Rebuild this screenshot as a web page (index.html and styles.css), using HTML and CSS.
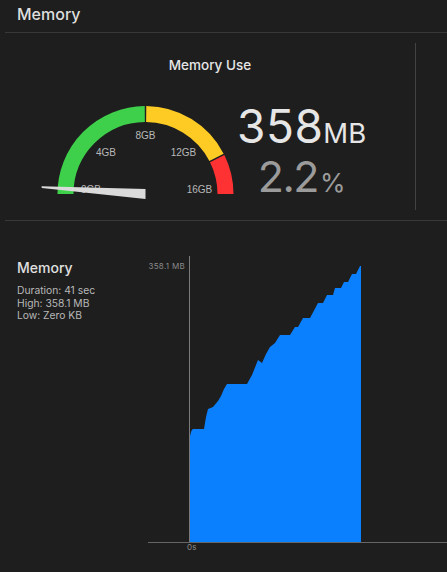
FILE: index.html
```html
<!DOCTYPE html>
<html lang="en">
<head>
<meta charset="utf-8">
<title>Memory</title>
<link rel="stylesheet" href="styles.css">
</head>
<body>
<header class="header">Memory</header>

<section class="overview">
  <div class="usage">
    <h2 class="usage-title">Memory Use</h2>
    <div class="usage-body">
      <svg class="gauge" width="202" height="115" viewBox="35 95 202 115">
        <path d="M65.5,194 A80,80 0 0 1 144.8,114" class="arc-green"/>
        <path d="M146.2,114 A80,80 0 0 1 216.5,157.3" class="arc-yellow"/>
        <path d="M217.2,158.6 A80,80 0 0 1 225.5,194" class="arc-red"/>
        <text x="145.5" y="139" class="tick">8GB</text>
        <text x="106" y="155.7" class="tick">4GB</text>
        <text x="183.5" y="155.7" class="tick">12GB</text>
        <text x="91" y="192.7" class="tick">0GB</text>
        <text x="199.5" y="192.7" class="tick">16GB</text>
        <polygon points="41.5,186.3 41.8,188 145.5,199 145.5,189" class="needle"/>
      </svg>
      <div class="readout">
        <div class="readout-main"><span class="digits-main">358</span><span class="unit-main">MB</span></div>
        <div class="readout-pct"><span class="digits-pct">2.2</span><span class="unit-pct">%</span></div>
      </div>
    </div>
  </div>
  <div class="vsep"></div>
</section>

<section class="history">
  <div class="info">
    <h3 class="info-title">Memory</h3>
    <p class="info-line">Duration: 41 sec</p>
    <p class="info-line">High: 358.1 MB</p>
    <p class="info-line">Low: Zero KB</p>
  </div>
  <svg class="chart" width="307" height="310" viewBox="140 250 307 310">
    <path class="area" d="M189,542 L189,457 C189,440 190,431 193,429 L204,429 L206,417 L208,409 L213,407 L218,401 L221,396 L224,389 L227,384 L247,384 L252,375 L258,360 L262,363 L266,354 L270,347 L275,343 L280,335 L290,335 L295,327 L298,327 L303,318 L310,318 L318,303 L323,303 L327,295 L333,295 L335,288 L341,288 L344,282 L348,282 L352,274 L356,274 L360,266 L361,266 L361,542 Z"/>
    <line x1="189.5" y1="256" x2="189.5" y2="542" class="axis-y"/>
    <line x1="148" y1="542.5" x2="447" y2="542.5" class="axis-x"/>
    <text x="185" y="268.5" class="axis-label end">358.1 MB</text>
    <text x="187" y="549.5" class="axis-label">0s</text>
  </svg>
</section>
</body>
</html>
```

FILE: styles.css
```css
html, body {
  margin: 0;
  padding: 0;
  background: #1e1e1e;
}

body {
  width: 447px;
  height: 572px;
  overflow: hidden;
  font-family: Inter, "Liberation Sans", sans-serif;
  color: #e0e0e0;
}

.header {
  margin-left: 5px;
  padding: 4px 0 8px 12px;
  height: 20px;
  line-height: 20px;
  font-size: 16px;
  font-weight: 500;
  color: #dedede;
  border-bottom: 1px solid #383838;
}

.overview {
  display: flex;
  margin-left: 5px;
  height: 187px;
  border-bottom: 1px solid #383838;
}

.usage {
  width: 410px;
  display: flex;
  flex-direction: column;
}

.usage-title {
  margin: 0;
  padding-top: 24px;
  text-align: center;
  font-size: 13.5px;
  line-height: 16px;
  font-weight: 500;
  color: #e6e6e6;
}

.usage-body {
  display: flex;
  align-items: flex-start;
  margin-top: 22px;
  padding-left: 30px;
}

.gauge {
  display: block;
  flex: none;
}

.arc-green, .arc-yellow, .arc-red {
  fill: none;
  stroke-width: 16;
}
.arc-green { stroke: #3fd04b; }
.arc-yellow { stroke: #fecb25; }
.arc-red { stroke: #fe3233; }

.tick {
  font-family: "Liberation Sans", Arial, sans-serif;
  font-size: 10px;
  fill: #b8b8b8;
  text-anchor: middle;
}

.needle {
  fill: #dadada;
}

.readout {
  display: flex;
  flex-direction: column;
  align-items: center;
  padding-top: 7px;
}

.readout-main {
  font-size: 46px;
  line-height: 48px;
  color: #e6e6e6;
  white-space: nowrap;
}

.digits-main {
  letter-spacing: 0.5px;
}

.unit-main {
  font-size: 27.5px;
  line-height: 1;
}

.readout-pct {
  margin-top: 2px;
  font-size: 43px;
  line-height: 48px;
  color: #9b9b9b;
  white-space: nowrap;
}

.digits-pct {
  letter-spacing: -1.5px;
}

.unit-pct {
  font-size: 26px;
  line-height: 1;
  margin-left: 2px;
}

.vsep {
  width: 1px;
  margin: 10px 0;
  background: #424242;
}

.history {
  display: flex;
  align-items: flex-start;
}

.info {
  width: 123px;
  flex: none;
  padding-left: 17px;
  padding-top: 38px;
}

.info-title {
  margin: 0 0 8px 0;
  font-size: 14px;
  line-height: 17px;
  font-weight: 500;
  color: #e0e0e0;
}

.info-line {
  margin: 0;
  font-size: 10.3px;
  line-height: 12.5px;
  color: #b8b8b8;
}

.chart {
  display: block;
  flex: none;
  margin-top: 29px;
}

.area {
  fill: #0a80ff;
}

.axis-y {
  stroke: #7a7a7a;
  stroke-width: 1;
}

.axis-x {
  stroke: #666;
  stroke-width: 1;
}

.axis-label {
  font-family: Inter, "Liberation Sans", sans-serif;
  font-size: 8px;
  letter-spacing: 0.3px;
  fill: #8a8a8a;
}

.axis-label.end {
  text-anchor: end;
}
```
